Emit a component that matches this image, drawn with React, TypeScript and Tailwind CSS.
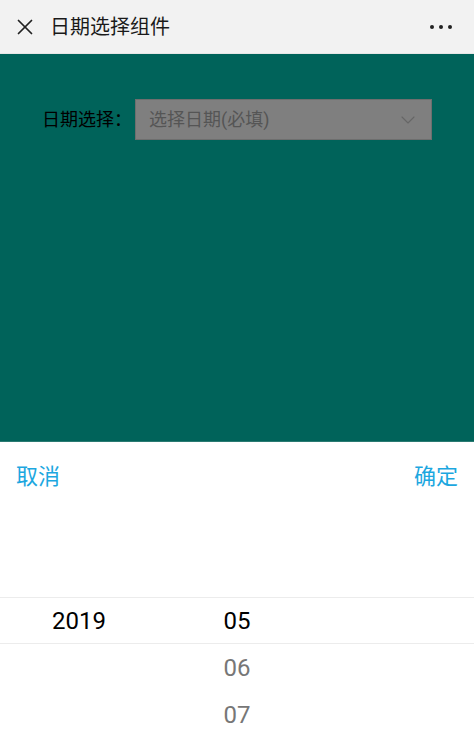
import { X, ChevronDown } from 'lucide-react';

const FONT = { fontFamily: 'Roboto, "Noto Sans CJK SC", sans-serif' };

function Column({ items, selected }: { items: string[]; selected: number }) {
	return (
		<div className="flex-1 flex flex-col items-center">
			{items.map((item, i) => (
				<div
					key={item}
					className={`h-[47px] flex items-center text-[24px] ${i === selected ? 'text-black' : 'text-[#777]'}`}
				>
					{item}
				</div>
			))}
		</div>
	);
}

export default function App() {
	return (
		<div className="w-[474px] h-[749px] flex flex-col overflow-hidden bg-white" style={FONT}>
			<div className="h-[54px] shrink-0 flex items-center px-[12px] bg-[#f2f2f2] border-b border-[#e6e6e6]">
				<X className="w-[26px] h-[26px] text-[#222]" strokeWidth={1.6} />
				<span className="ml-[12px] text-[20px] text-[#1a1a1a]">日期选择组件</span>
				<div className="ml-auto mr-[10px] flex gap-[5px]">
					<span className="w-[4px] h-[4px] rounded-full bg-[#222]" />
					<span className="w-[4px] h-[4px] rounded-full bg-[#222]" />
					<span className="w-[4px] h-[4px] rounded-full bg-[#222]" />
				</div>
			</div>

			<div className="h-[388px] shrink-0 bg-[#00635a] pt-[45px] pl-[42px] border-b border-[#2a7a72]">
				<div className="flex items-center">
					<span className="w-[93px] text-[18px] text-black">日期选择：</span>
					<div className="w-[297px] h-[41px] flex items-center px-[13px] bg-[#7f7f7f] border border-[#6e6e6e]">
						<span className="text-[18px] text-[#555]">选择日期(必填)</span>
						<ChevronDown className="ml-auto mr-[-2px] w-[24px] h-[24px] text-[#666]" strokeWidth={1.1} />
					</div>
				</div>
			</div>

			<div className="flex-1 flex flex-col">
				<div className="h-[68px] flex items-center justify-between px-[16px] text-[22px] text-[#1ca7df]">
					<span>取消</span>
					<span>确定</span>
				</div>
				<div className="h-[87px]" />
				<div className="border-t border-b border-[#ececec] h-[47px] flex">
					<div className="flex-1 flex items-center justify-center text-[24px] text-black">2019</div>
					<div className="flex-1 flex items-center justify-center text-[24px] text-black">05</div>
					<div className="flex-1" />
				</div>
				<div className="flex">
					<div className="flex-1" />
					<Column items={['06', '07']} selected={-1} />
					<div className="flex-1" />
				</div>
			</div>
		</div>
	);
}
